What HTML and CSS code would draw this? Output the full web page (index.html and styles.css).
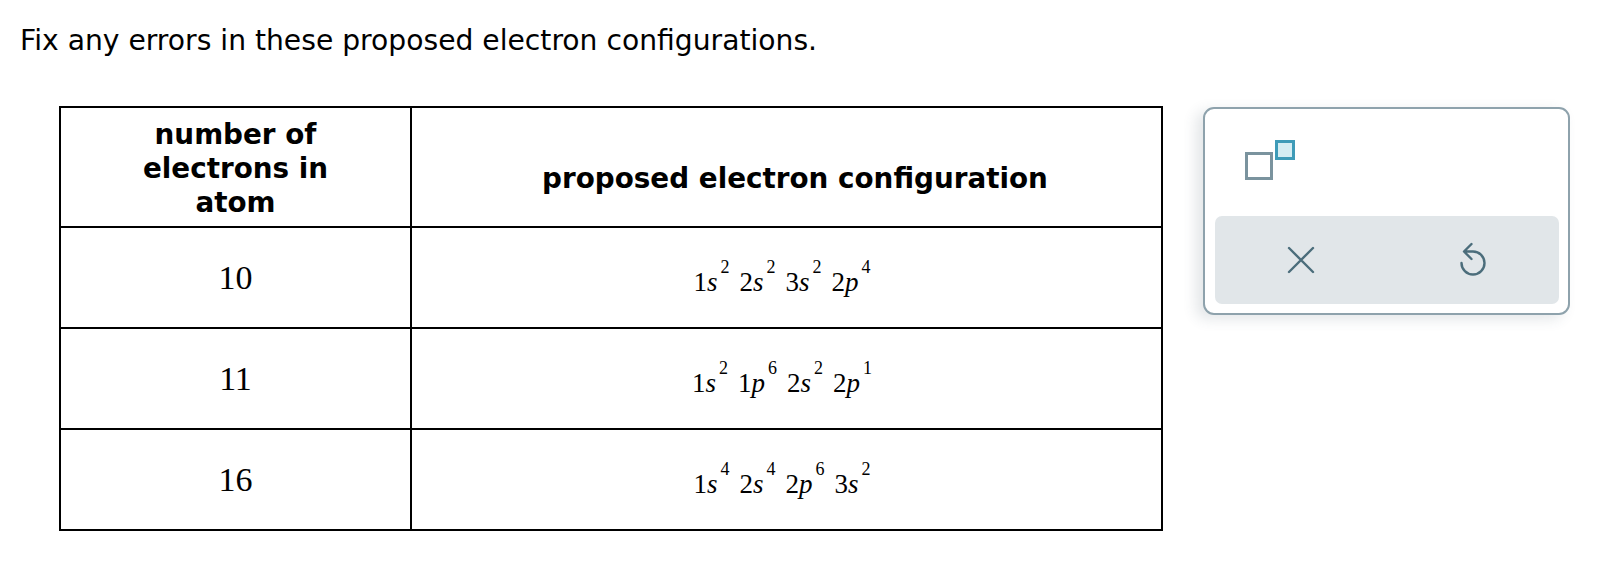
FILE: index.html
```html
<!DOCTYPE html>
<html lang="en">
<head>
<meta charset="utf-8">
<title>Electron configurations</title>
<link rel="stylesheet" href="styles.css">
</head>
<body>
<p class="prompt">Fix any errors in these proposed electron configurations.</p>
<div class="workspace">
  <table class="configs">
    <thead>
      <tr>
        <th class="col-num">number of<br>electrons in<br>atom</th>
        <th class="col-conf">proposed electron configuration</th>
      </tr>
    </thead>
    <tbody>
      <tr>
        <td class="num">10</td>
        <td class="conf"><span class="term">1<i>s</i><sup>2</sup></span><span class="term">2<i>s</i><sup>2</sup></span><span class="term">3<i>s</i><sup>2</sup></span><span class="term">2<i>p</i><sup>4</sup></span></td>
      </tr>
      <tr>
        <td class="num">11</td>
        <td class="conf"><span class="term">1<i>s</i><sup>2</sup></span><span class="term">1<i>p</i><sup>6</sup></span><span class="term">2<i>s</i><sup>2</sup></span><span class="term">2<i>p</i><sup>1</sup></span></td>
      </tr>
      <tr>
        <td class="num">16</td>
        <td class="conf"><span class="term">1<i>s</i><sup>4</sup></span><span class="term">2<i>s</i><sup>4</sup></span><span class="term">2<i>p</i><sup>6</sup></span><span class="term">3<i>s</i><sup>2</sup></span></td>
      </tr>
    </tbody>
  </table>

  <div class="panel">
    <div class="toolbar">
      <button class="sup-tool" type="button" aria-label="superscript">
        <span class="sq-base"></span><span class="sq-sup"></span>
      </button>
    </div>
    <div class="actions">
      <button class="action" type="button" aria-label="clear">
        <svg width="28" height="28" viewBox="0 0 28 28"><path d="M2 2 L26 26 M26 2 L2 26" fill="none" stroke="currentColor" stroke-width="2.4" stroke-linecap="round"/></svg>
      </button>
      <button class="action" type="button" aria-label="undo">
        <svg width="30" height="36" viewBox="0 0 30 36"><path d="M15 9.5 A11.5 11.5 0 1 1 3.5 21 M15 9.5 H6.5 M13.5 2 L6 9.5 L13.5 17" fill="none" stroke="currentColor" stroke-width="2.4" stroke-linecap="round" stroke-linejoin="round"/></svg>
      </button>
    </div>
  </div>
</div>
</body>
</html>
```

FILE: styles.css
```css
html, body {
  margin: 0;
  padding: 0;
  background: #ffffff;
}

body {
  padding: 8px;
  font-family: "DejaVu Sans", Verdana, sans-serif;
  color: #000;
}

.prompt {
  margin: 16px 0 0 12px;
  font-size: 28.2px;
  line-height: 34px;
}

.workspace {
  display: flex;
  align-items: flex-start;
  gap: 40px;
  margin: 48px 0 0 51px;
}

.configs {
  border-collapse: collapse;
  width: 1104px;
  border: 2px solid #000;
}

.configs th,
.configs td {
  border: 2px solid #000;
  text-align: center;
  vertical-align: middle;
  padding: 0;
}

.configs th {
  font-family: "DejaVu Sans", Verdana, sans-serif;
  font-weight: bold;
  font-size: 27.8px;
  line-height: 34px;
}

.configs th.col-num {
  width: 349px;
  height: 114px;
  padding-top: 4px;
}

.configs th.col-conf {
  height: 95px;
  padding-top: 23px;
  padding-left: 17px;
}

.configs td.num {
  height: 99px;
  font-family: "Liberation Serif", "Times New Roman", serif;
  font-size: 34px;
  line-height: 40px;
}

.configs td.conf {
  height: 91px;
  padding-top: 8px;
  padding-right: 9px;
  font-family: "Liberation Serif", "Times New Roman", serif;
  font-size: 27px;
  line-height: 32px;
}

.term {
  display: inline-block;
  margin-right: 10px;
}

.term:last-child {
  margin-right: 0;
}

.term i {
  font-style: italic;
}

.term sup {
  font-size: 18px;
  line-height: 0;
  vertical-align: 18px;
  margin-left: 3px;
}

.panel {
  margin-top: 1px;
  border: 2px solid #8ea2ac;
  border-radius: 11px;
  padding: 10px 9px 9px 10px;
  box-sizing: border-box;
  height: 208px;
  width: 367px;
  box-shadow: -7px 4px 14px rgba(60, 80, 90, 0.14);
  background: #fff;
  display: flex;
  flex-direction: column;
}

.toolbar {
  height: 97px;
  padding: 21px 0 0 30px;
  box-sizing: border-box;
}

.sup-tool {
  display: flex;
  align-items: flex-start;
  gap: 2px;
  border: 0;
  background: none;
  padding: 0;
  cursor: pointer;
}

.sq-base {
  width: 28px;
  height: 28px;
  margin-top: 12px;
  border: 3px solid #7a939e;
  box-sizing: border-box;
  background: #fff;
}

.sq-sup {
  width: 20px;
  height: 20px;
  border: 3px solid #3e9bb8;
  box-sizing: border-box;
  background: #d4edf3;
}

.actions {
  flex: 1;
  display: flex;
  background: #e1e6e9;
  border-radius: 7px;
}

.action {
  flex: 1;
  display: flex;
  align-items: center;
  justify-content: center;
  border: 0;
  background: none;
  padding: 0;
  color: #4b6d7b;
  cursor: pointer;
}
```
